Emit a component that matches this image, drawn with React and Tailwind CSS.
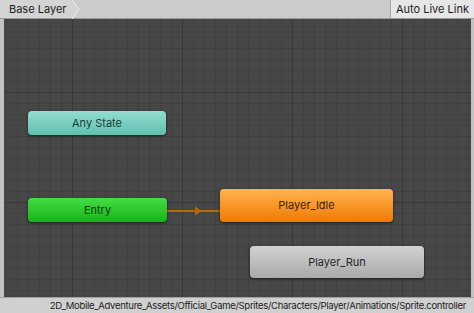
const nodeBase =
  "absolute flex items-center justify-center rounded-[4px] text-[11px] shadow-[0_1px_3px_rgba(0,0,0,0.6)]";

export default function App() {
  return (
    <div className="w-[474px] h-[313px] flex flex-col bg-[#c2c2c2] font-['Inter','Noto_Sans',sans-serif] text-[#1c1c1c] overflow-hidden">
      {/* Toolbar */}
      <div className="h-[19px] flex items-stretch bg-[#cbcbcb] border-b border-[#9a9a9a]">
        <div className="relative flex items-center pl-[9px] pr-[6px] bg-[#d4d4d4] text-[11px]">
          Base Layer
          <svg className="absolute -right-[8px] top-0" width="8" height="19" viewBox="0 0 8 19">
            <path d="M0 0 L7 9.5 L0 19 Z" fill="#d4d4d4" />
            <path d="M0 0 L7 9.5 L0 19" fill="none" stroke="#ededed" strokeWidth="1" />
          </svg>
        </div>
        <div className="flex-1" />
        <div className="flex items-center px-[5px] bg-[#e6e6e6] border-l border-[#a8a8a8] text-[11px]">
          Auto Live Link
        </div>
      </div>

      {/* Graph canvas */}
      <div className="flex-1 flex px-[4px] pr-[3px]">
        <div className="relative flex-1 bg-[#474747] bg-[linear-gradient(to_right,#393939_1px,transparent_1px),linear-gradient(to_bottom,#393939_1px,transparent_1px),linear-gradient(to_right,#404040_1px,transparent_1px),linear-gradient(to_bottom,#404040_1px,transparent_1px)] bg-[size:110px_110px,110px_110px,11px_11px,11px_11px] bg-[position:68px_73px,68px_73px,2px_7px,2px_7px]">
          {/* transition arrow */}
          <svg className="absolute left-[163px] top-[185px]" width="54" height="14" viewBox="0 0 54 14">
            <line x1="0" y1="7" x2="54" y2="7" stroke="#b06a0a" strokeWidth="2" />
            <path d="M28 2.5 L35 7 L28 11.5 Z" fill="#b06a0a" />
          </svg>

          <div className={`${nodeBase} left-[24px] top-[92px] w-[138px] h-[24px] bg-[linear-gradient(to_bottom,#94ddd0,#5fc0ae)] text-[#173c35]`}>
            Any State
          </div>
          <div className={`${nodeBase} left-[24px] top-[179px] w-[139px] h-[24px] bg-[linear-gradient(to_bottom,#45dc45,#16b416)] text-[#0f3a0f]`}>
            Entry
          </div>
          <div className={`${nodeBase} left-[216px] top-[170px] w-[173px] h-[33px] bg-[linear-gradient(to_bottom,#ffb44e,#ef7a02)] text-[#3a2108]`}>
            Player_Idle
          </div>
          <div className={`${nodeBase} left-[246px] top-[227px] w-[174px] h-[32px] bg-[linear-gradient(to_bottom,#d2d2d2,#a9a9a9)] text-[#262626]`}>
            Player_Run
          </div>
        </div>
      </div>

      {/* Status bar */}
      <div className="h-[16px] flex items-center justify-end pr-[8px] bg-[#d0d0d0] border-t border-[#a0a0a0] text-[9.5px] tracking-[-0.3px] leading-none whitespace-nowrap">
        2D_Mobile_Adventure_Assets/Official_Game/Sprites/Characters/Player/Animations/Sprite.controller
      </div>
    </div>
  );
}
